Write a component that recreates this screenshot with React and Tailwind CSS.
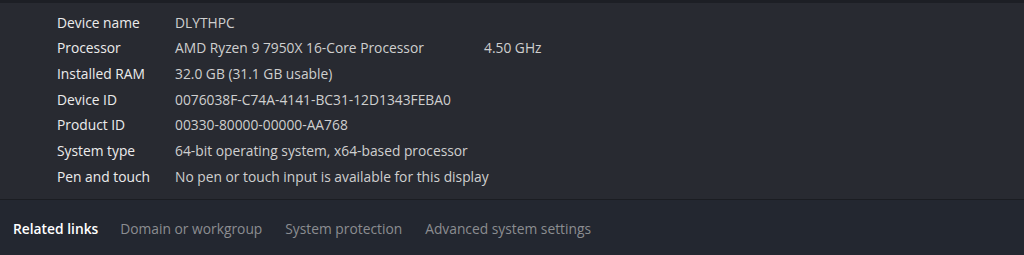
import React from "react";

const specs = [
    { label: "Device name", value: "DLYTHPC" },
    { label: "Processor", value: "AMD Ryzen 9 7950X 16-Core Processor", extra: "4.50 GHz" },
    { label: "Installed RAM", value: "32.0 GB (31.1 GB usable)" },
    { label: "Device ID", value: "0076038F-C74A-4141-BC31-12D1343FEBA0" },
    { label: "Product ID", value: "00330-80000-00000-AA768" },
    { label: "System type", value: "64-bit operating system, x64-based processor" },
    { label: "Pen and touch", value: "No pen or touch input is available for this display" },
];

const links = ["Domain or workgroup", "System protection", "Advanced system settings"];

const App = () => {
    return (
        <div
            className="w-[1024px] h-[255px] bg-[#23262e] flex flex-col overflow-hidden"
            style={{ fontFamily: '"Open Sans", "Noto Sans", sans-serif' }}
        >
            {/* top edge of the card */}
            <div className="h-[3px] bg-[#1d1f25]" />

            {/* Device specifications */}
            <div className="h-[197px] bg-[#282a31] pt-[7px] pl-[57px] border-b border-[#1b1d22]">
                {specs.map((row) => (
                    <div key={row.label} className="flex items-center h-[25.7px] text-[13.8px]">
                        <span className="w-[118px] text-[#ececec]">{row.label}</span>
                        <span className="w-[309px] text-[#cfcfcf] whitespace-nowrap">{row.value}</span>
                        {row.extra && <span className="text-[#cfcfcf]">{row.extra}</span>}
                    </div>
                ))}
            </div>

            {/* Related links */}
            <div className="flex-1 bg-[#232730] flex items-center pl-[13px] pt-[3px] text-[13.8px]">
                <span className="text-white font-semibold mr-[22px]">Related links</span>
                <div className="flex gap-[23px]">
                    {links.map((link) => (
                        <span key={link} className="text-[#8b8d91]">
                            {link}
                        </span>
                    ))}
                </div>
            </div>
        </div>
    );
};

export default App;
